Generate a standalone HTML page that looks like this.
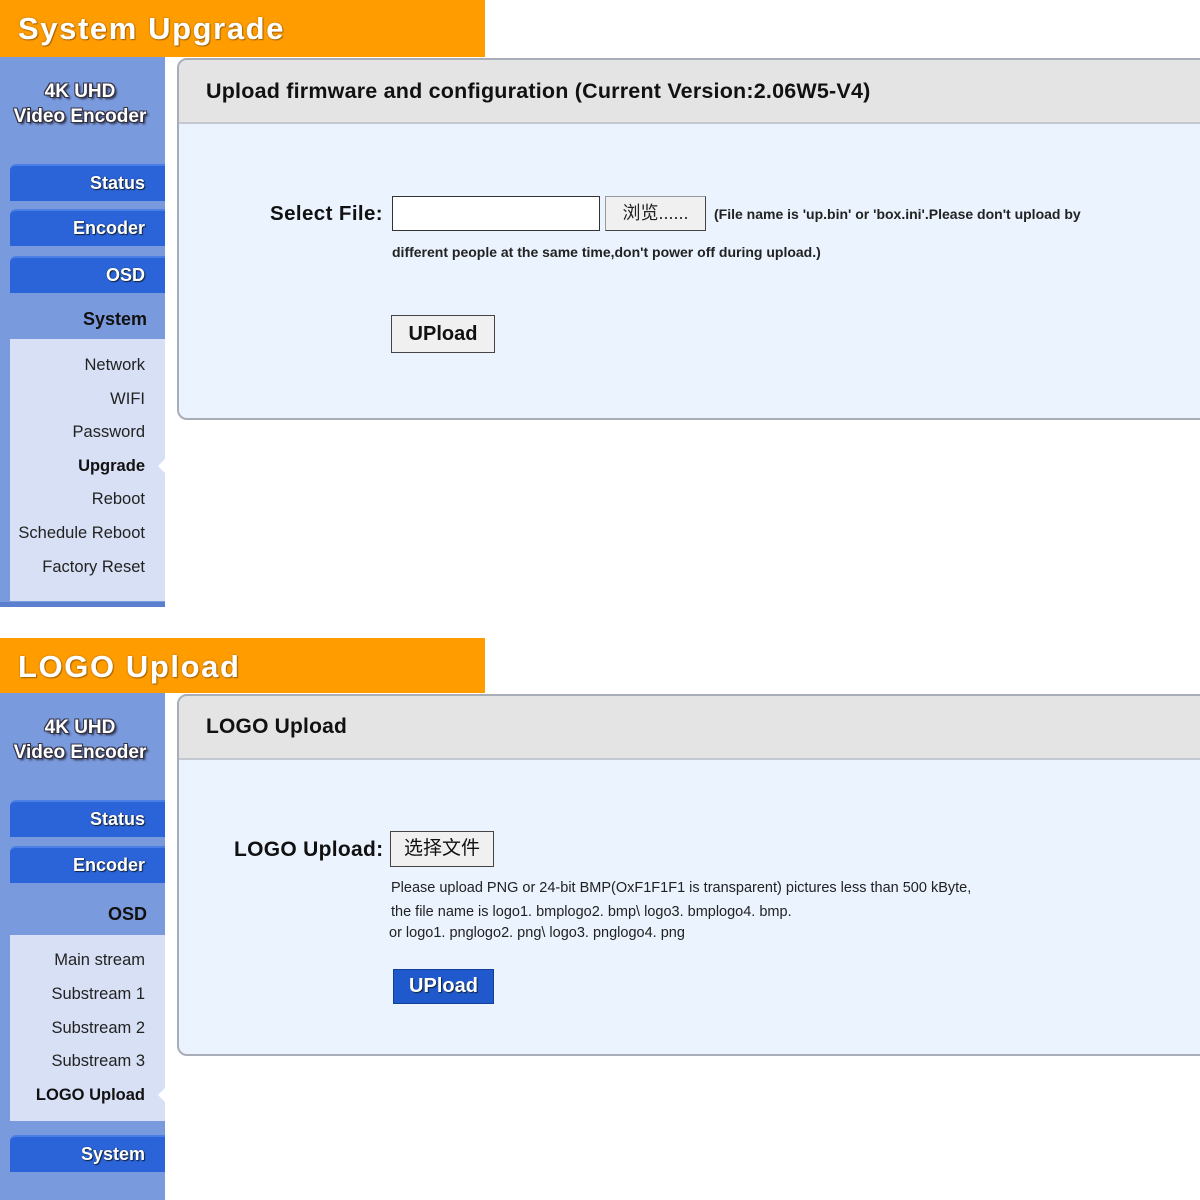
<!DOCTYPE html>
<html><head><meta charset="utf-8"><style>
*{margin:0;padding:0;box-sizing:border-box}
body{width:1200px;height:1200px;background:#fff;position:relative;overflow:hidden;font-family:"Liberation Sans","Noto Sans CJK SC",sans-serif;color:#111}
.a{position:absolute}
.orange{background:#ff9d00;color:#fff;font-weight:bold;font-size:31px;padding-left:18px;text-shadow:0 0 2px #b36b00,1px 1px 1px #a06000;letter-spacing:1.6px}
.side{background:#7a9ade;left:0;width:165px}
.brand{left:0;width:160px;text-align:center;color:#fff;font-weight:bold;font-size:19px;line-height:25px;text-shadow:-1px -1px 0 #334,1px -1px 0 #334,-1px 1px 0 #334,1px 1px 0 #334,2px 2px 2px #223}
.btn{left:10px;width:155px;height:37px;background:#2b63d8;border-radius:6px 0 0 0;border-top:2px solid #4c7fe6;color:#fff;font-weight:bold;font-size:18px;text-align:right;padding-right:20px;line-height:35px;text-shadow:0 0 1px #123,1px 1px 1px #123}
.lbl{left:10px;width:155px;text-align:right;padding-right:18px;font-weight:bold;font-size:18px;color:#111}
.sub{left:10px;width:155px;background:#d8e0f6}
.it{right:20px;font-size:16.5px;color:#222;text-align:right;white-space:nowrap}
.notch{width:0;height:0;border-top:7px solid transparent;border-bottom:7px solid transparent;border-right:7px solid #fff}
.panel{left:177px;width:1040px;background:#eaf3fe;border:2px solid #a8adb8;border-radius:10px 0 0 10px;overflow:hidden}
.ph{background:#e4e4e4;height:64px;border-bottom:2px solid #c4c8d0;font-weight:bold;font-size:21px;padding-left:27px;line-height:62px;letter-spacing:.2px}
.b{font-weight:bold}
</style></head><body>

<div class="a orange" style="left:0;top:0;width:485px;height:57px;line-height:57px">System Upgrade</div>
<div class="a side" style="top:57px;height:550px"></div>
<div class="a" style="left:0;top:602px;width:165px;height:5px;background:#5b7ecf"></div>
<div class="a brand" style="top:79px">4K UHD<br>Video Encoder</div>
<div class="a btn" style="top:164px">Status</div>
<div class="a btn" style="top:209px">Encoder</div>
<div class="a btn" style="top:256px">OSD</div>
<div class="a lbl" style="top:309px">System</div>
<div class="a sub" style="top:339px;height:262px">
  <div class="a it" style="top:17px">Network</div>
  <div class="a it" style="top:51px">WIFI</div>
  <div class="a it" style="top:84px">Password</div>
  <div class="a it b" style="top:118px;color:#111">Upgrade</div>
  <div class="a it" style="top:151px">Reboot</div>
  <div class="a it" style="top:185px">Schedule Reboot</div>
  <div class="a it" style="top:219px">Factory Reset</div>
</div>
<div class="a notch" style="left:158px;top:459px"></div>

<div class="a panel" style="top:58px;height:362px">
  <div class="ph" style="font-size:21.5px">Upload firmware and configuration (Current Version:2.06W5-V4)</div>
</div>
<div class="a b" style="left:270px;top:202px;font-size:20.5px;letter-spacing:.4px">Select File:</div>
<div class="a" style="left:392px;top:196px;width:208px;height:35px;background:#fff;border:1px solid #333"></div>
<div class="a" style="left:605px;top:196px;width:101px;height:35px;background:#f0f0f0;border:1px solid #999;border-right-color:#444;border-bottom-color:#444;font-size:18px;text-align:center;line-height:33px;color:#222">浏览......</div>
<div class="a b" style="left:714px;top:206px;font-size:14px;color:#222">(File name is 'up.bin' or 'box.ini'.Please don't upload by</div>
<div class="a b" style="left:392px;top:244px;font-size:14px;color:#222">different people at the same time,don't power off during upload.)</div>
<div class="a" style="left:391px;top:315px;width:104px;height:38px;background:#f0f0f0;border:1px solid #444;font-size:20px;text-align:center;line-height:36px;font-weight:bold;color:#111">UPload</div>

<div class="a orange" style="left:0;top:638px;width:485px;height:55px;line-height:57px">LOGO Upload</div>
<div class="a side" style="top:693px;height:507px"></div>
<div class="a brand" style="top:715px">4K UHD<br>Video Encoder</div>
<div class="a btn" style="top:800px">Status</div>
<div class="a btn" style="top:846px">Encoder</div>
<div class="a lbl" style="top:904px">OSD</div>
<div class="a sub" style="top:935px;height:186px">
  <div class="a it" style="top:16px">Main stream</div>
  <div class="a it" style="top:50px">Substream 1</div>
  <div class="a it" style="top:84px">Substream 2</div>
  <div class="a it" style="top:117px">Substream 3</div>
  <div class="a it b" style="top:151px;color:#111">LOGO Upload</div>
</div>
<div class="a notch" style="left:158px;top:1088px"></div>
<div class="a btn" style="top:1135px">System</div>

<div class="a panel" style="top:694px;height:362px">
  <div class="ph">LOGO Upload</div>
</div>
<div class="a b" style="left:234px;top:838px;font-size:21px;letter-spacing:.3px">LOGO Upload:</div>
<div class="a" style="left:390px;top:831px;width:104px;height:36px;background:#f0f0f0;border:1px solid #444;font-size:19px;text-align:center;line-height:34px;color:#111">选择文件</div>
<div class="a" style="left:391px;top:876px;font-size:14.5px;color:#222;line-height:24px">Please upload PNG or 24-bit BMP(OxF1F1F1 is transparent) pictures less than 500 kByte,<br>the file name is logo1. bmplogo2. bmp\ logo3. bmplogo4. bmp.</div>
<div class="a" style="left:389px;top:925px;font-size:14.5px;color:#222">or logo1. pnglogo2. png\ logo3. pnglogo4. png</div>
<div class="a" style="left:393px;top:969px;width:101px;height:35px;background:#1f59cc;border:1px solid #143f99;color:#fff;font-weight:bold;font-size:20px;text-align:center;line-height:33px;text-shadow:1px 1px 1px #123">UPload</div>

</body></html>
